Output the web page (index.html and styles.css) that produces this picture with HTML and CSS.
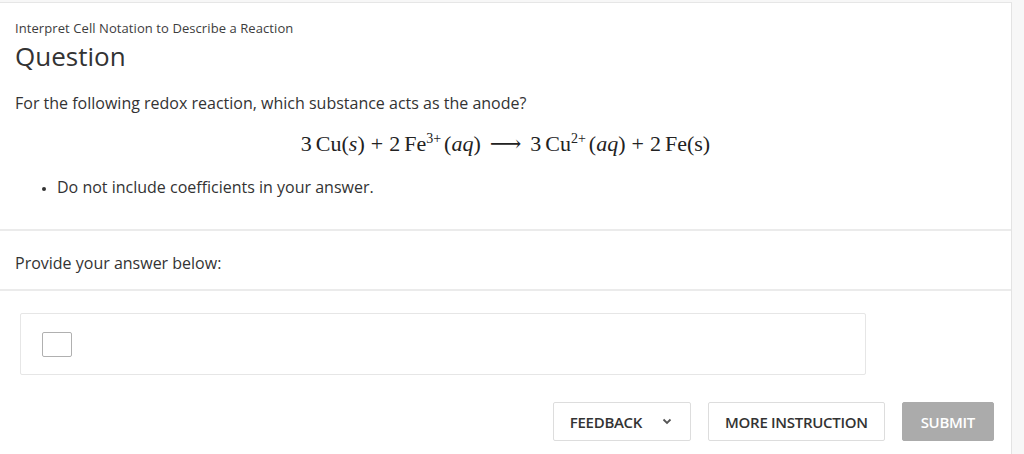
FILE: index.html
```html
<!DOCTYPE html>
<html lang="en">
<head>
  <meta charset="UTF-8" />
  <meta name="viewport" content="width=device-width, initial-scale=1.0" />
  <title>Question</title>
  <link rel="stylesheet" href="styles.css">
</head>
<body>
  <div class="card">
    <div class="question">
      <div class="topic">Interpret Cell Notation to Describe a Reaction</div>
      <h2 class="heading">Question</h2>
      <p class="prompt">For the following redox reaction, which substance acts as the anode?</p>
      <div class="equation">
        <span>3</span><span class="sp">Cu</span>(<i>s</i>)<span class="op">+</span><span>2</span><span class="sp">Fe<sup>3+</sup></span><span class="gap">(<i>aq</i>)</span><span class="arrow">&#x27F6;</span><span>3</span><span class="sp">Cu<sup>2+</sup></span><span class="gap">(<i>aq</i>)</span><span class="op">+</span><span>2</span><span class="sp">Fe</span>(s)
      </div>
      <ul class="notes">
        <li>Do not include coefficients in your answer.</li>
      </ul>
    </div>
    <div class="provide">Provide your answer below:</div>
    <div class="answer">
      <div class="answer-box">
        <div class="blank"></div>
      </div>
      <div class="actions">
        <button class="btn">FEEDBACK
          <svg class="chev" width="10" height="7" viewBox="0 0 10 7"><path d="M1.5 1.5 L5 5 L8.5 1.5" fill="none" stroke="#555" stroke-width="1.8"/></svg>
        </button>
        <button class="btn">MORE INSTRUCTION</button>
        <button class="btn submit">SUBMIT</button>
      </div>
    </div>
  </div>
</body>
</html>
```

FILE: styles.css
```css
* {
  box-sizing: border-box;
}
body {
  margin: 0;
  background: #f7f7f7;
  font-family: 'Open Sans', sans-serif;
  color: #333;
}
.card {
  width: 1012px;
  height: 452px;
  margin-top: 2px;
  background: #fff;
  border-top: 1px solid #e6e6e6;
  border-right: 1px solid #e3e3e3;
}
.question {
  height: 228px;
  padding: 16px 15px 0;
  border-bottom: 2px solid #ebebeb;
}
.topic {
  font-size: 13px;
  line-height: 18px;
  letter-spacing: 0.08px;
  color: #3d3d3d;
}
.heading {
  margin: 0;
  font-size: 26px;
  font-weight: 400;
  line-height: 34px;
  margin-top: 2px;
  color: #333;
}
.prompt {
  margin: 19px 0 0;
  font-size: 16px;
  line-height: 22px;
}
.equation {
  margin-top: 17px;
  text-align: center;
  font-family: 'Liberation Serif', 'DejaVu Serif', serif;
  font-size: 22px;
  line-height: 26px;
  color: #222;
}
.equation .sp {
  margin-left: 4px;
}
.equation sup {
  font-size: 14px;
  line-height: 0;
}
.equation .gap {
  margin-left: 3px;
}
.equation .op {
  margin: 0 6px;
}
.equation .arrow {
  margin: 0 9px;
}
.notes {
  margin: 19px 0 0;
  padding-left: 42px;
  font-size: 16px;
  line-height: 22px;
}
.notes li::marker {
  font-size: 11px;
}
.provide {
  height: 60px;
  padding-left: 15px;
  font-size: 16px;
  line-height: 64px;
  border-bottom: 2px solid #ebebeb;
}
.answer {
  padding: 22px 17px 0 20px;
}
.answer-box {
  width: 846px;
  height: 62px;
  border: 1px solid #e6e6e6;
  border-radius: 2px;
  display: flex;
  align-items: center;
  padding-left: 21px;
}
.blank {
  width: 30px;
  height: 25px;
  border: 1.5px solid #b0b0b0;
  border-radius: 2px;
}
.actions {
  display: flex;
  justify-content: flex-end;
  gap: 17px;
  margin-top: 27px;
}
.btn {
  height: 39px;
  padding: 0 16px;
  background: #fff;
  border: 1px solid #ddd;
  border-radius: 2px;
  font-family: 'Open Sans', sans-serif;
  font-size: 15px;
  font-weight: 600;
  letter-spacing: -0.3px;
  color: #333;
  display: flex;
  align-items: center;
}
.chev {
  margin-left: 20px;
  margin-right: 2px;
}
.submit {
  background: #ababab;
  border-color: #ababab;
  color: #fff;
  padding: 0 18px;
}
```
